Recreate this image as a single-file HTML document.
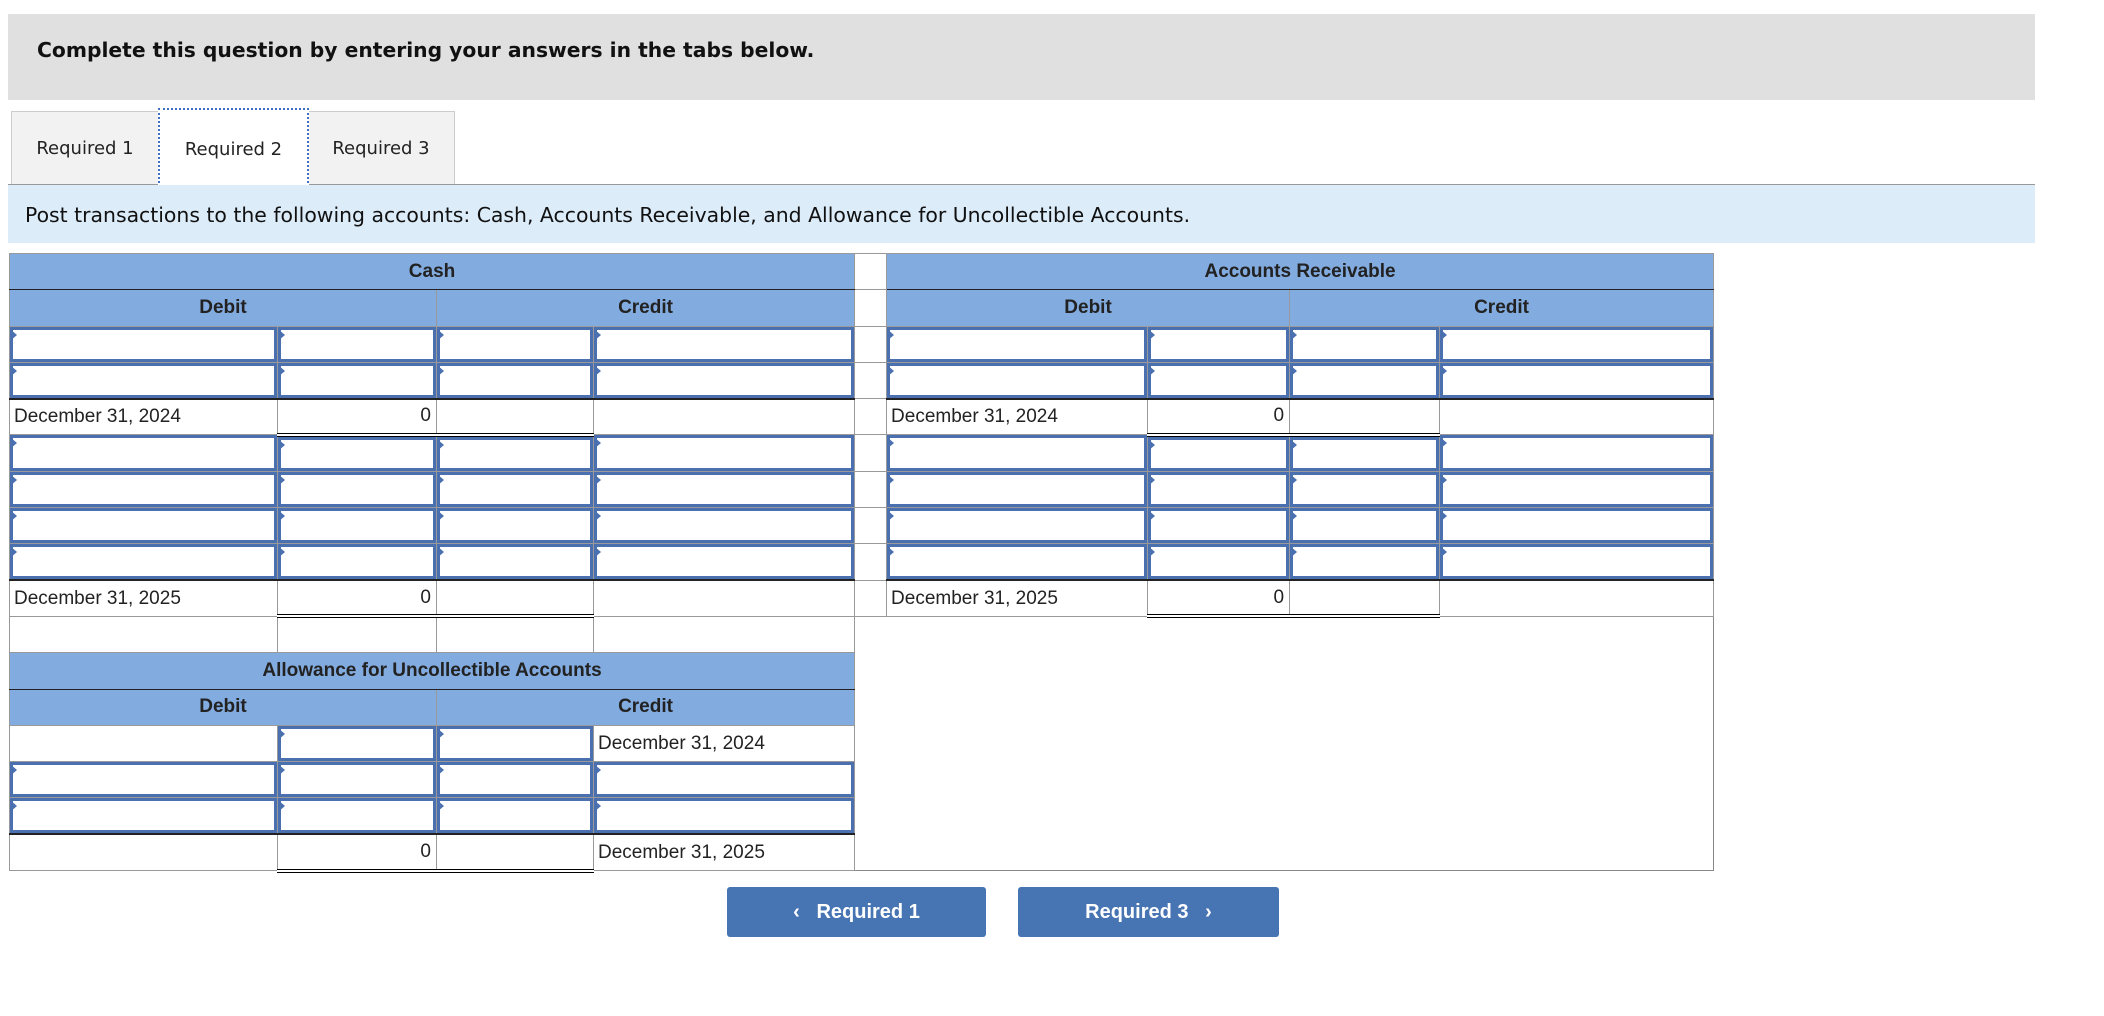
<!DOCTYPE html>
<html><head><meta charset="utf-8"><style>
*{box-sizing:border-box;margin:0;padding:0}
body{width:2104px;height:1016px;background:#fff;position:relative;font-family:"Liberation Sans",Arial,sans-serif;color:#222;overflow:hidden}
.top{position:absolute;left:8px;top:14px;width:2027px;height:86px;background:#e0e0e0}
.top span{position:absolute;left:29px;top:24px;font-family:"DejaVu Sans",sans-serif;font-size:20.3px;font-weight:bold;color:#111}
.tab{position:absolute;top:111px;height:73px;font-family:"DejaVu Sans",sans-serif;font-size:18px;line-height:73px;text-align:center;color:#222}
.t1{left:11px;width:148px;background:#f2f2f2;border:1px solid #ccc;border-bottom:none}
.t2{left:158px;width:151px;top:108px;height:79px;line-height:79px;background:#fff;border:2px dotted #3f6fc0}
.t3{left:308px;width:147px;background:#f2f2f2;border:1px solid #ccc;border-bottom:none;border-left:none}
.line{position:absolute;left:8px;top:184px;width:2027px;height:1px;background:#999}
.info{position:absolute;left:8px;top:185px;width:2027px;height:58px;background:#ddecf9;font-family:"DejaVu Sans",sans-serif;font-size:20.4px;line-height:60px;padding-left:17px;color:#111}
table{position:absolute;left:9px;top:253px;width:1704px;border-collapse:collapse;table-layout:fixed;border:1px solid #888}
td{height:36.3px;border:1px solid #999;padding:0;position:relative;font-size:19px;white-space:nowrap}
.h{background:#82abdf;font-weight:bold;text-align:center;color:#222}
.hb{border-bottom:1.5px solid #222}
.g{border:1px solid #999;background:#fff}
.in::after{content:"";position:absolute;left:0;top:0;right:0;bottom:0;border:3px solid #4a70b0}
.in::before{content:"";position:absolute;left:0;top:2px;border-left:7px solid #4a70b0;border-top:6px solid transparent;border-bottom:6px solid transparent;z-index:2}
.d{padding-left:4px}
.n{text-align:right;padding-right:5px}
.dbl{border-bottom:4px double #000}
.bt{border-top:2px solid #222}
.btn{position:absolute;top:887px;height:50px;background:#4774b2;border-radius:3px;color:#fff;font-weight:bold;font-size:20px;line-height:50px;text-align:center}
</style></head><body>
<div class="top"><span>Complete this question by entering your answers in the tabs below.</span></div>
<div class="tab t1">Required 1</div>
<div class="tab t3">Required 3</div>
<div class="line"></div>
<div class="tab t2">Required 2</div>
<div class="info">Post transactions to the following accounts: Cash, Accounts Receivable, and Allowance for Uncollectible Accounts.</div>
<table>
<colgroup><col style="width:268px"><col style="width:159px"><col style="width:157px"><col style="width:261px"><col style="width:32px"><col style="width:261px"><col style="width:142px"><col style="width:150px"><col style="width:274px"></colgroup>
<tr><td class="h hb" colspan="4">Cash</td><td class="g"></td><td class="h hb" colspan="4">Accounts Receivable</td></tr>
<tr><td class="h" colspan="2">Debit</td><td class="h" colspan="2">Credit</td><td class="g"></td><td class="h" colspan="2">Debit</td><td class="h" colspan="2">Credit</td></tr>
<tr><td class="in"></td><td class="in"></td><td class="in"></td><td class="in"></td><td class="g"></td><td class="in"></td><td class="in"></td><td class="in"></td><td class="in"></td></tr>
<tr><td class="in"></td><td class="in"></td><td class="in"></td><td class="in"></td><td class="g"></td><td class="in"></td><td class="in"></td><td class="in"></td><td class="in"></td></tr>
<tr><td class="d bt">December 31, 2024</td><td class="n dbl bt">0</td><td class="dbl bt"></td><td class="bt"></td><td class="g"></td><td class="d bt">December 31, 2024</td><td class="n dbl bt">0</td><td class="dbl bt"></td><td class="bt"></td></tr>
<tr><td class="in"></td><td class="in"></td><td class="in"></td><td class="in"></td><td class="g"></td><td class="in"></td><td class="in"></td><td class="in"></td><td class="in"></td></tr>
<tr><td class="in"></td><td class="in"></td><td class="in"></td><td class="in"></td><td class="g"></td><td class="in"></td><td class="in"></td><td class="in"></td><td class="in"></td></tr>
<tr><td class="in"></td><td class="in"></td><td class="in"></td><td class="in"></td><td class="g"></td><td class="in"></td><td class="in"></td><td class="in"></td><td class="in"></td></tr>
<tr><td class="in"></td><td class="in"></td><td class="in"></td><td class="in"></td><td class="g"></td><td class="in"></td><td class="in"></td><td class="in"></td><td class="in"></td></tr>
<tr><td class="d bt">December 31, 2025</td><td class="n dbl bt">0</td><td class="dbl bt"></td><td class="bt"></td><td class="g"></td><td class="d bt">December 31, 2025</td><td class="n dbl bt">0</td><td class="dbl bt"></td><td class="bt"></td></tr>
<tr><td></td><td></td><td></td><td></td><td colspan="5" rowspan="7" style="border:none;border-top:1px solid #999"></td></tr>
<tr><td class="h hb" colspan="4">Allowance for Uncollectible Accounts</td></tr>
<tr><td class="h" colspan="2">Debit</td><td class="h" colspan="2">Credit</td></tr>
<tr><td></td><td class="in"></td><td class="in"></td><td class="d">December 31, 2024</td></tr>
<tr><td class="in"></td><td class="in"></td><td class="in"></td><td class="in"></td></tr>
<tr><td class="in"></td><td class="in"></td><td class="in"></td><td class="in"></td></tr>
<tr><td class="bt"></td><td class="n dbl bt">0</td><td class="dbl bt"></td><td class="d bt">December 31, 2025</td></tr>
</table>
<div class="btn" style="left:727px;width:259px">&#x2039;&nbsp;&nbsp;&nbsp;Required 1</div>
<div class="btn" style="left:1018px;width:261px">Required 3&nbsp;&nbsp;&nbsp;&#x203A;</div>
</body></html>
